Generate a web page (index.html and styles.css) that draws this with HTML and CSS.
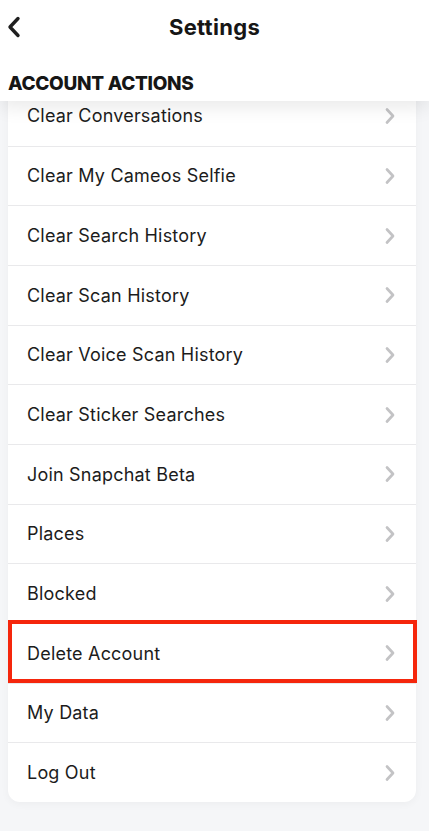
FILE: index.html
```html
<!DOCTYPE html>
<html>
<head>
<meta charset="utf-8">
<link rel="stylesheet" href="styles.css">
</head>
<body>
<header class="topbar">
  <div class="titlebar">
    <svg class="back" viewBox="0 0 14 22" width="14" height="22"><path d="M11 2.5 L3 11 L11 19.5" fill="none" stroke="#1f1f1f" stroke-width="3.4" stroke-linecap="round" stroke-linejoin="round"/></svg>
    <h1 class="title">Settings</h1>
  </div>
  <div class="section">ACCOUNT ACTIONS</div>
</header>
<main class="content">
  <ul class="card">
    <li class="row"><span>Clear Conversations</span><svg class="chev" viewBox="0 0 12 18" width="12" height="18"><path d="M3 2.5 L9 9 L3 15.5" /></svg></li>
    <li class="row"><span>Clear My Cameos Selfie</span><svg class="chev" viewBox="0 0 12 18" width="12" height="18"><path d="M3 2.5 L9 9 L3 15.5" /></svg></li>
    <li class="row"><span>Clear Search History</span><svg class="chev" viewBox="0 0 12 18" width="12" height="18"><path d="M3 2.5 L9 9 L3 15.5" /></svg></li>
    <li class="row"><span>Clear Scan History</span><svg class="chev" viewBox="0 0 12 18" width="12" height="18"><path d="M3 2.5 L9 9 L3 15.5" /></svg></li>
    <li class="row"><span>Clear Voice Scan History</span><svg class="chev" viewBox="0 0 12 18" width="12" height="18"><path d="M3 2.5 L9 9 L3 15.5" /></svg></li>
    <li class="row"><span>Clear Sticker Searches</span><svg class="chev" viewBox="0 0 12 18" width="12" height="18"><path d="M3 2.5 L9 9 L3 15.5" /></svg></li>
    <li class="row"><span>Join Snapchat Beta</span><svg class="chev" viewBox="0 0 12 18" width="12" height="18"><path d="M3 2.5 L9 9 L3 15.5" /></svg></li>
    <li class="row"><span>Places</span><svg class="chev" viewBox="0 0 12 18" width="12" height="18"><path d="M3 2.5 L9 9 L3 15.5" /></svg></li>
    <li class="row"><span>Blocked</span><svg class="chev" viewBox="0 0 12 18" width="12" height="18"><path d="M3 2.5 L9 9 L3 15.5" /></svg></li>
    <li class="row highlight"><span>Delete Account</span><svg class="chev" viewBox="0 0 12 18" width="12" height="18"><path d="M3 2.5 L9 9 L3 15.5" /></svg></li>
    <li class="row"><span>My Data</span><svg class="chev" viewBox="0 0 12 18" width="12" height="18"><path d="M3 2.5 L9 9 L3 15.5" /></svg></li>
    <li class="row"><span>Log Out</span><svg class="chev" viewBox="0 0 12 18" width="12" height="18"><path d="M3 2.5 L9 9 L3 15.5" /></svg></li>
  </ul>
</main>
</body>
</html>
```

FILE: styles.css
```css
* { box-sizing: border-box; }
html, body { margin: 0; padding: 0; }
body {
  background: #f5f6f8;
  font-family: "Inter", "Lato", sans-serif;
  color: #1c1c1c;
  width: 429px;
  height: 831px;
  overflow: hidden;
  position: relative;
}
.topbar {
  position: absolute;
  top: 0; left: 0; right: 0;
  height: 101px;
  background: #fff;
  z-index: 5;
  box-shadow: 0 6px 18px rgba(0,0,0,0.09);
}
.titlebar {
  height: 56px;
  display: flex;
  align-items: center;
  justify-content: center;
  position: relative;
}
.back {
  position: absolute;
  left: 7px;
  top: 16px;
}
.title {
  margin: 0;
  font-size: 22px;
  font-weight: 700;
  letter-spacing: 0.3px;
  color: #161616;
  margin-top: -2px;
}
.section {
  padding-left: 8px;
  font-size: 19px;
  font-weight: 800;
  color: #161616;
  margin-top: 16px;
  letter-spacing: -0.3px;
}
.content {
  padding: 86px 13px 0 8px;
}
.card {
  list-style: none;
  margin: 0;
  padding: 0;
  background: #fff;
  border-radius: 12px;
  box-shadow: 0 2px 8px rgba(0,0,0,0.04);
}
.row {
  height: 59.67px;
  display: flex;
  align-items: center;
  justify-content: space-between;
  padding: 0 20px 0 19px;
  font-size: 18px;
  letter-spacing: 0.2px;
  border-top: 1px solid #e9e9eb;
  position: relative;
}
.row:first-child { border-top: none; }
.chev path {
  fill: none;
  stroke: #c3c3c5;
  stroke-width: 2.7;
  stroke-linecap: round;
  stroke-linejoin: round;
}
.highlight::after {
  content: "";
  position: absolute;
  left: 0; right: -1px;
  top: -4px; bottom: 0;
  border: 4.5px solid #f5260c;
}
```
